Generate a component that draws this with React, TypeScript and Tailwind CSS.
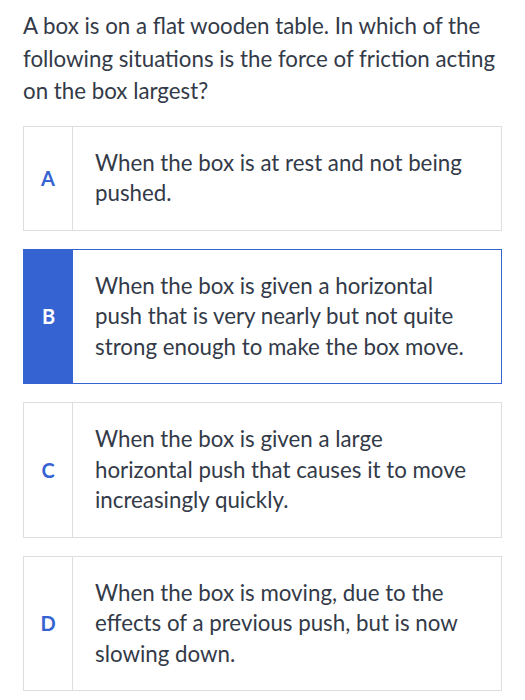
import React from 'react';

const options = [
  { key: 'A', text: 'When the box is at rest and not being pushed.', selected: false },
  { key: 'B', text: 'When the box is given a horizontal push that is very nearly but not quite strong enough to make the box move.', selected: true },
  { key: 'C', text: 'When the box is given a large horizontal push that causes it to move increasingly quickly.', selected: false },
  { key: 'D', text: 'When the box is moving, due to the effects of a previous push, but is now slowing down.', selected: false },
];

const App = () => {
  return (
    <div className="w-[525px] h-[700px] bg-white text-[#333a48] font-['Lato',sans-serif]">
      <div className="px-[23px] pt-[10px]">
        <p className="text-[22.3px] leading-[32.5px] pr-[4px]">
          A box is on a flat wooden table. In which of the following situations is the force of friction acting on the box largest?
        </p>

        <div className="mt-[18px] flex flex-col gap-[18px] w-[479px]">
          {options.map((opt) => (
            <div
              key={opt.key}
              className={
                opt.selected
                  ? 'flex border border-[#3563d1]'
                  : 'flex border border-[#dedede]'
              }
            >
              <div
                className={
                  opt.selected
                    ? 'w-[49px] shrink-0 flex items-center justify-center bg-[#3563d1] text-white font-bold text-[20px]'
                    : 'w-[49px] shrink-0 flex items-center justify-center border-r border-[#dedede] text-[#3563d1] font-bold text-[20px]'
                }
              >
                {opt.key}
              </div>
              <div className="flex-1 pl-[22px] pr-[24px] py-[21px] text-[22.3px] leading-[30.5px]">
                {opt.text}
              </div>
            </div>
          ))}
        </div>
      </div>
    </div>
  );
};

export default App;
